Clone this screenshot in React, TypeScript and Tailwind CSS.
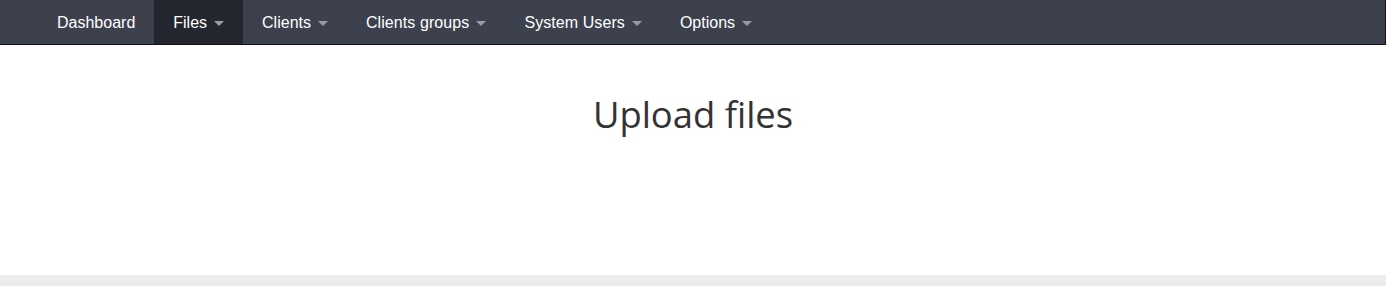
import React from "react";

const items = [
  { label: "Dashboard", caret: false, active: false },
  { label: "Files", caret: true, active: true },
  { label: "Clients", caret: true, active: false },
  { label: "Clients groups", caret: true, active: false },
  { label: "System Users", caret: true, active: false },
  { label: "Options", caret: true, active: false },
];

export default function App() {
  return (
    <div className="min-h-[286px] flex flex-col bg-white" style={{ fontFamily: '"Liberation Sans", Arial, sans-serif' }}>
      <nav className="h-[45px] bg-[#3d414d] border-b border-r border-[#111] flex pl-[38px]">
        {items.map((it) => (
          <div
            key={it.label}
            className={`flex items-center pt-[2px] px-[19px] text-[16px] text-white ${it.active ? "bg-[#23262e]" : ""}`}
          >
            <span className={it.label === "Clients groups" || it.label === "System Users" ? "tracking-[0.08px]" : ""}>{it.label}</span>
            {it.caret && (
              <span className="ml-[7px] mt-[1px] w-0 h-0 border-l-[5px] border-r-[5px] border-t-[5px] border-l-transparent border-r-transparent border-t-[#9a9ca3]" />
            )}
          </div>
        ))}
      </nav>
      <main className="h-[230px] flex justify-center">
        <h1
          className="mt-[46px] text-[36.4px] leading-[46px] text-[#333]"
          style={{ fontFamily: '"Open Sans", sans-serif' }}
        >
          Upload files
        </h1>
      </main>
      <footer className="flex-1 bg-[#ececec]" />
    </div>
  );
}
